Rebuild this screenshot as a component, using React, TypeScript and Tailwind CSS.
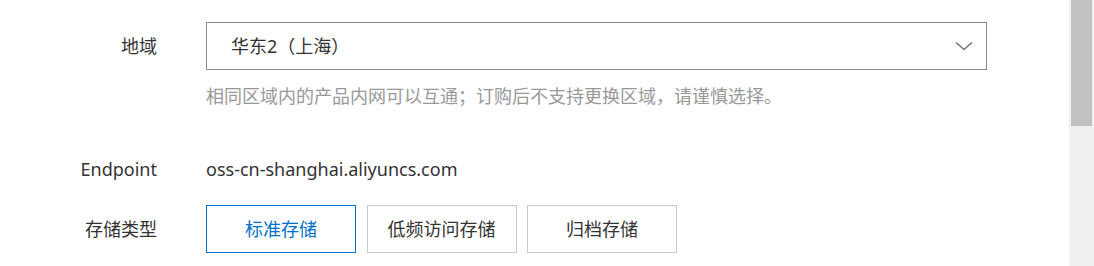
import React from "react";

const font = { fontFamily: '"Noto Sans", "Noto Sans CJK SC", sans-serif' };

export default function App() {
  return (
    <div className="flex w-[1094px] h-[266px] overflow-hidden bg-white" style={font}>
      <div className="flex-1 pt-[22px] text-[18px] text-[#333]">
        <div className="flex">
          <div className="w-[157px] shrink-0 h-[48px] flex items-center justify-end">地域</div>
          <div className="ml-[49px]">
            <div className="w-[781px] h-[48px] border border-[#8a8a8a] flex items-center justify-between pl-[24px] pr-[12px]">
              <span>华东2（上海）</span>
              <svg width="18" height="10" viewBox="0 0 18 10" className="mr-[1px]">
                <path d="M1 1.5 L9 8.5 L17 1.5" fill="none" stroke="#777" strokeWidth="1.6" />
              </svg>
            </div>
            <div className="mt-[14px] h-[24px] leading-[24px] text-[#999]">
              相同区域内的产品内网可以互通；订购后不支持更换区域，请谨慎选择。
            </div>
          </div>
        </div>
        <div className="flex mt-[49px] h-[24px] leading-[24px]">
          <div className="w-[157px] shrink-0 text-right">Endpoint</div>
          <div className="ml-[49px]">oss-cn-shanghai.aliyuncs.com</div>
        </div>
        <div className="flex mt-[24px]">
          <div className="w-[157px] shrink-0 h-[48px] flex items-center justify-end">存储类型</div>
          <div className="ml-[49px] flex gap-[10.5px]">
            <div className="w-[150px] h-[48px] border border-[#0070cc] text-[#0070cc] flex items-center justify-center">标准存储</div>
            <div className="w-[150px] h-[48px] border border-[#c8c8c8] flex items-center justify-center">低频访问存储</div>
            <div className="w-[150px] h-[48px] border border-[#c8c8c8] flex items-center justify-center">归档存储</div>
          </div>
        </div>
      </div>
      <div className="w-[25px] h-[266px] bg-[#f0f0f0] pl-[2px] pr-[2px]">
        <div className="h-[126px] bg-[#c1c1c1]" />
      </div>
    </div>
  );
}
